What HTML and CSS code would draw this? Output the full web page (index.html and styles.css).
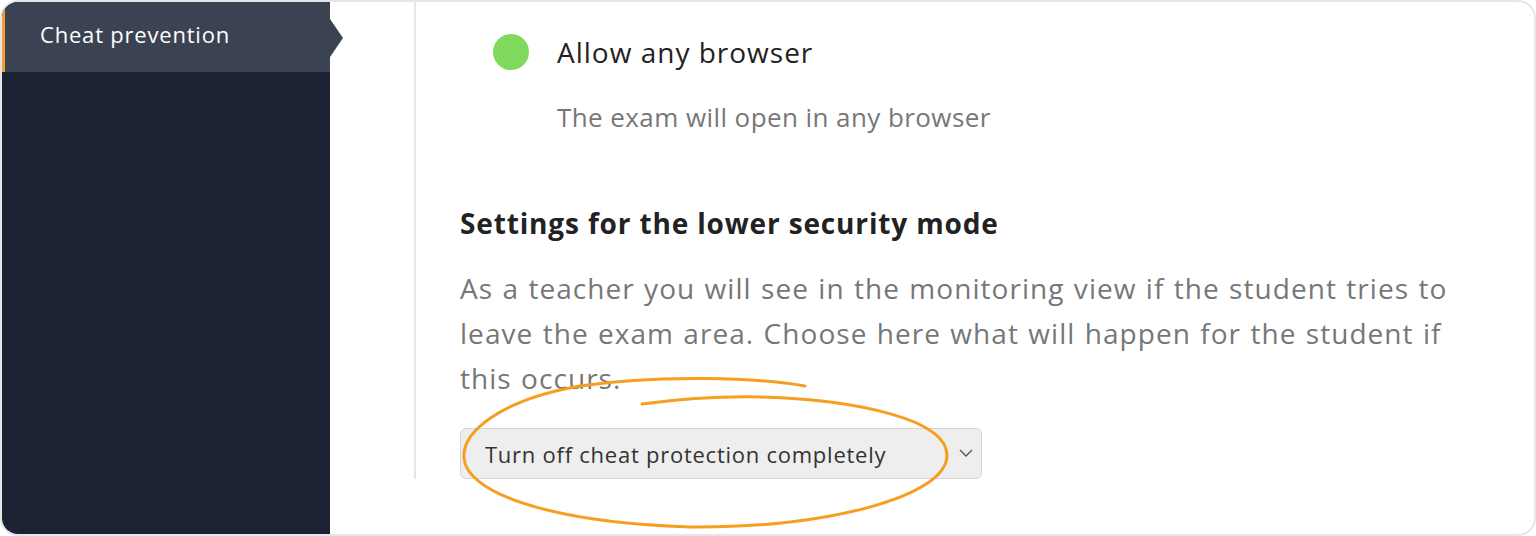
FILE: index.html
```html
<!DOCTYPE html>
<html lang="en">
<head>
    <meta charset="UTF-8">
    <meta name="viewport" content="width=device-width, initial-scale=1.0">
    <title>Cheat prevention</title>
    <link rel="stylesheet" href="styles.css">
</head>
<body>

    <div class="frame">
        <!-- --- 側欄 --- -->
        <nav class="sidebar">
            <div class="nav-item active">Cheat prevention</div>
        </nav>

        <!-- --- 主內容 --- -->
        <main class="main">
            <div class="settings">
                <div class="option">
                    <span class="dot"></span>
                    <span class="option-label">Allow any browser</span>
                </div>
                <p class="option-desc">The exam will open in any browser</p>

                <h2>Settings for the lower security mode</h2>
                <p class="intro">As a teacher you will see in the monitoring view if the student tries to leave the exam area. Choose here what will happen for the student if this occurs.</p>

                <div class="select-wrap">
                    <select class="mode-select">
                        <option>Turn off cheat protection completely</option>
                    </select>
                    <svg class="chevron" width="14" height="8" viewBox="0 0 14 8">
                        <path d="M1 1 L7 7 L13 1" fill="none" stroke="#555" stroke-width="1.4"/>
                    </svg>
                </div>
            </div>

            <!-- 手繪圈選 -->
            <svg class="scribble" width="1536" height="536" viewBox="0 0 1536 536">
                <path d="M805 386 C 760 378, 660 374, 580 386 C 500 400, 462 432, 464 458 C 466 490, 540 522, 690 527 C 830 528, 946 496, 947 456 C 948 420, 860 400, 760 397 C 715 396, 680 399, 642 404"
                      fill="none" stroke="#f59e1f" stroke-width="3" stroke-linecap="round"/>
            </svg>
        </main>
    </div>

</body>
</html>
```

FILE: styles.css
```css
/* --- 整體樣式 --- */
body {
    margin: 0;
    font-family: "Open Sans", Lato, Arial, sans-serif;
    background-color: #ffffff;
}

/* --- 外框 --- */
.frame {
    width: 1536px;
    height: 536px;
    box-sizing: border-box;
    border: 2px solid #e6e6e6;
    border-radius: 18px;
    overflow: hidden;
    display: flex;
    background-color: #ffffff;
}

/* --- 側欄 --- */
.sidebar {
    width: 328px;
    flex-shrink: 0;
    background-color: #1b2333;
    position: relative;
    z-index: 1;
}

.nav-item {
    height: 70px;
    display: flex;
    align-items: center;
    padding-left: 38px;
    padding-bottom: 6px;
    box-sizing: border-box;
    color: #ffffff;
    font-size: 22px;
    letter-spacing: 0.8px;
    position: relative;
}

.nav-item.active {
    background-color: #3b4352;
    border-left: 3px solid #f0a030;
    padding-left: 35px;
}

.nav-item.active::after {
    content: "";
    position: absolute;
    right: -13px;
    top: 17px;
    border-left: 13px solid #3b4352;
    border-top: 19px solid transparent;
    border-bottom: 19px solid transparent;
}

/* --- 主內容 --- */
.main {
    flex: 1;
    position: relative;
}

.settings {
    margin-left: 84px;
    border-left: 2px solid #e6e6e6;
    padding-left: 44px;
    padding-top: 32px;
    width: 1000px;
}

.option {
    display: flex;
    align-items: center;
    gap: 28px;
    height: 36px;
    padding-left: 33px;
}

.dot {
    width: 36px;
    height: 36px;
    border-radius: 50%;
    background-color: #7ed95c;
}

.option-label {
    font-size: 28px;
    line-height: 36px;
    letter-spacing: 1px;
    color: #222222;
}

.option-desc {
    margin: 32px 0 0;
    padding-left: 97px;
    font-size: 26px;
    line-height: 30px;
    letter-spacing: 0.42px;
    color: #777777;
}

h2 {
    margin: 73px 0 0;
    font-size: 28px;
    line-height: 36px;
    letter-spacing: 0.85px;
    font-weight: 700;
    color: #222222;
}

.intro {
    margin: 25px 0 0;
    font-size: 28px;
    line-height: 45px;
    letter-spacing: 1.05px;
    word-spacing: 1px;
    color: #777777;
}

/* --- 下拉選單 --- */
.select-wrap {
    margin-top: 27px;
    width: 522px;
    position: relative;
}

.mode-select {
    -webkit-appearance: none;
    appearance: none;
    width: 100%;
    height: 51px;
    box-sizing: border-box;
    border: 1px solid #d6d6d6;
    border-radius: 6px;
    background-color: #eeeeee;
    padding: 0 0 0 24px;
    font-family: "Open Sans", Lato, Arial, sans-serif;
    font-size: 22px;
    letter-spacing: 0.75px;
    color: #333333;
}

.chevron {
    position: absolute;
    right: 9px;
    top: 21px;
}

/* --- 手繪圈選 --- */
.scribble {
    position: absolute;
    left: -330px;
    top: -2px;
    pointer-events: none;
}
```
